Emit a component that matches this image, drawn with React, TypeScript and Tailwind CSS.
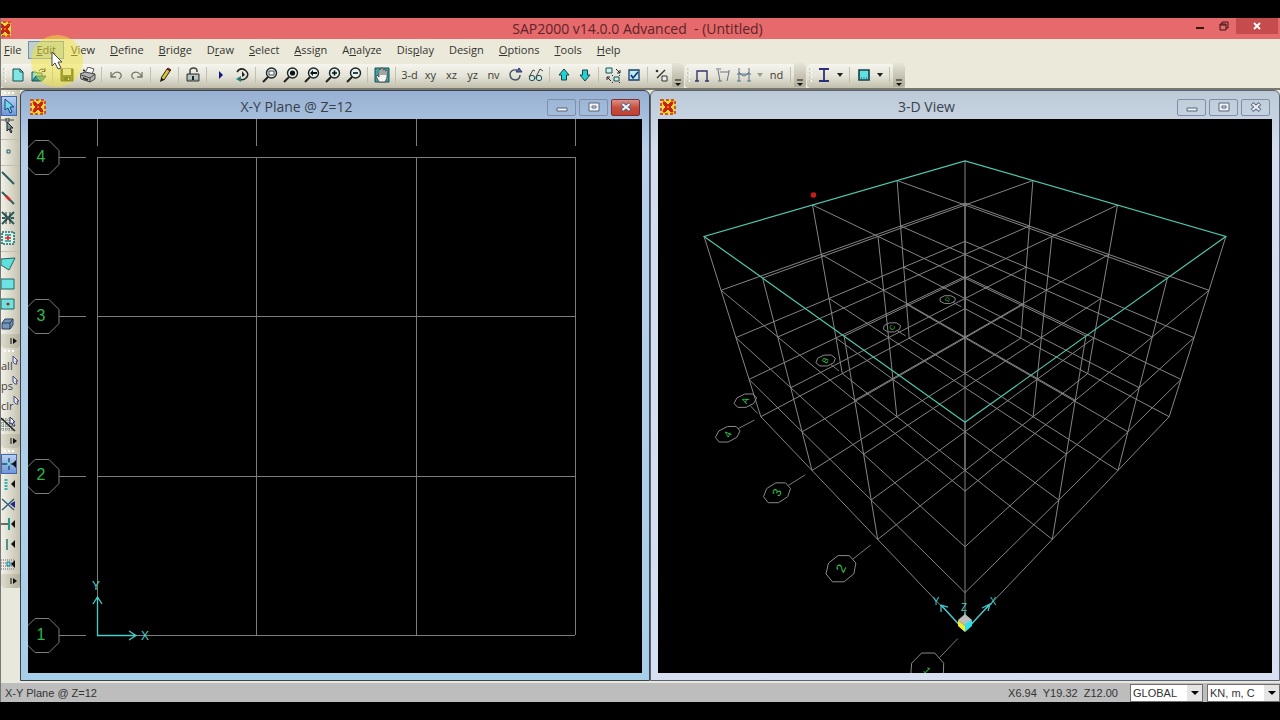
import React from 'react'

interface IconProps {
    name: string;
}

interface ToolButton {
    name: string;
    label?: string;
    active?: boolean;
}

type Point = [number, number];

const menus: string[][] = [
    ["", "F", "ile"],
    ["", "E", "dit"],
    ["", "V", "iew"],
    ["", "D", "efine"],
    ["", "B", "ridge"],
    ["D", "r", "aw"],
    ["", "S", "elect"],
    ["", "A", "ssign"],
    ["A", "n", "alyze"],
    ["Dis", "p", "lay"],
    ["Desi", "g", "n"],
    ["", "O", "ptions"],
    ["", "T", "ools"],
    ["", "H", "elp"],
]

const mainTools: ToolButton[][] = [
    [{ name: "new" }, { name: "open" }],
    [{ name: "save" }, { name: "print" }],
    [{ name: "undo" }, { name: "redo" }],
    [{ name: "pencil" }],
    [{ name: "lock" }],
    [{ name: "run" }, { name: "redraw" }],
    [{ name: "zoom window" }, { name: "zoom full" }, { name: "zoom previous" }, { name: "zoom in" }, { name: "zoom out" }],
    [{ name: "pan" }],
    [{ name: "view 3-d", label: "3-d" }, { name: "view xy", label: "xy" }, { name: "view xz", label: "xz" }, { name: "view yz", label: "yz" }, { name: "view nv", label: "nv" }, { name: "rotate" }, { name: "glasses" }],
    [{ name: "up" }, { name: "down" }],
    [{ name: "shrink" }, { name: "check" }],
    [{ name: "assign" }],
]

const sideTools: ToolButton[][][] = [
    [
        [{ name: "pointer", active: true }, { name: "reshape" }],
        [{ name: "joint" }],
        [{ name: "frame" }, { name: "quick frame" }, { name: "braces" }, { name: "secondary" }],
        [{ name: "poly area" }, { name: "rect area" }, { name: "quick area" }, { name: "solid" }],
    ],
    [
        [{ name: "select all" }, { name: "select previous" }, { name: "clear selection" }, { name: "intersecting" }],
    ],
    [
        [{ name: "snap points", active: true }, { name: "snap ends" }, { name: "snap intersections" }, { name: "snap perpendicular" }, { name: "snap lines" }, { name: "snap grid" }],
    ],
]

const lens = (inner: React.ReactNode) => (
    <>
        <path d="M6 10 L1 15" stroke="#222" strokeWidth="2" />
        <circle cx="9.5" cy="6" r="5" fill="#dff3f0" stroke="#222" strokeWidth="1.4" />
        {inner}
    </>
)

const snapArrow = <path d="M14 4 V12 L10 8 Z" fill="#111" />
const smallCursor = <path d="M9 1 L14 6 L12 6 L14 10 L12 10 L11 7 L9 8 Z" fill="#fff" stroke="#33336b" />

const icons: Record<string, React.ReactNode> = {
    "new": <path d="M3 2 H10 L13 5 V14 H3 Z M10 2 V5 H13" fill="#7fe6e4" stroke="#174d55" />,
    "open": <><path d="M1 14 V5 H5 L6 6 H11 V9" fill="#8fdcd0" stroke="#20504c" /><path d="M1 14 L5 9 H15 L11 14 Z" fill="#2a9a96" stroke="#20504c" /><path d="M8 4 Q11 0 14 4 M14 1 V4.5 H11" fill="none" stroke="#222" /></>,
    "save": <><path d="M2 2 H14 V14 H2 Z" fill="#5a6018" stroke="#3c420c" /><path d="M4 2 H12 V8 H4 Z" fill="#e3e5c8" /><path d="M5 10 H11 V14 H5 Z" fill="#333a10" /><path d="M9 11 H10 V13 H9 Z" fill="#eee" /></>,
    "print": <><path d="M5 6 L8 0 L14 2 L12 7 Z" fill="#fafafa" stroke="#555" /><path d="M0 7 L5 5 L15 7 V12 L10 15 L1 12 Z" fill="#b2b2b2" stroke="#444" /><path d="M1 8 L10 11 V15 M10 11 L15 7" fill="none" stroke="#444" /><path d="M3 3 L5 4 M3 11 L8 13" stroke="#222" strokeWidth="1.5" /></>,
    "undo": <path d="M3 5 V10 H8 M3 10 Q7 3 12 6 Q15 9 11 12" fill="none" stroke="#767669" strokeWidth="1.3" />,
    "redo": <path d="M13 5 V10 H8 M13 10 Q9 3 4 6 Q1 9 5 12" fill="none" stroke="#767669" strokeWidth="1.3" />,
    "pencil": <><path d="M4 11 L10 2 L13 4 L7 13 Z" fill="#d8c437" stroke="#222" /><path d="M10 2 L11 1 L14 3 L13 4 Z" fill="#b03030" stroke="#601515" /><path d="M4 11 L3 15 L7 13 Z" fill="#111" /></>,
    "lock": <><path d="M5 7 V4 Q5 1 8.5 1 Q12 1 12 4 V5" fill="none" stroke="#444" strokeWidth="1.5" /><path d="M2 7 H14 V14 H2 Z" fill="#9aa9a6" stroke="#333" /><path d="M3 9 H13 M3 11 H13" stroke="#d8e2df" /><path d="M7 9 H9 V13 H7 Z" fill="#222" /></>,
    "run": <path d="M6 4 L10 8 L6 12 Z" fill="#14148c" />,
    "redraw": <><path d="M3 5 Q6 0 11 3 Q16 7 12 11 Q9 14 5 12" fill="none" stroke="#222" strokeWidth="1.5" /><path d="M7 9 L2 12 L7 15 Z" fill="#277c78" /><path d="M8 4 L11 8 L8 10 Z" fill="#222" /></>,
    "zoom window": lens(<path d="M7 4 H12 V8 H7 Z" fill="#fff" stroke="#444" />),
    "zoom full": lens(<circle cx="9.5" cy="6" r="2.6" fill="#111" />),
    "zoom previous": lens(<path d="M6 6 L9 3 V5 H13 V7 H9 V9 Z" fill="#111" />),
    "zoom in": lens(<path d="M7 6 H12 M9.5 3.5 V8.5" stroke="#111" strokeWidth="1.6" />),
    "zoom out": lens(<path d="M7 6 H12" stroke="#111" strokeWidth="1.6" />),
    "pan": <><path d="M1 1 H15 V15 H1 Z" fill="#38a7a5" stroke="#174d55" /><path d="M5 15 L2 9 L3 8 L5 10 V3 L6 2 L7 3 V1 H9 V3 L11 2 V4 L13 3 V11 L11 15 Z" fill="#f4f4f4" stroke="#555" /><path d="M7 3 V8 M9 3 V8 M11 4 V8" stroke="#555" /></>,
    "rotate": <><path d="M10 3 Q4 2 3 7 Q3 13 9 13 Q13 12 13 8" fill="none" stroke="#44515f" strokeWidth="1.4" /><path d="M9 5 H15 L12 1 Z" fill="#5a68a8" stroke="#33336b" /></>,
    "glasses": <><circle cx="4" cy="11" r="2.7" fill="#cde9e5" stroke="#284f4d" /><circle cx="11" cy="11" r="2.7" fill="#cde9e5" stroke="#284f4d" /><path d="M1 10 L5 3 L7 4 M8 10 L12 2 L15 4 M7 11 H8" fill="none" stroke="#444" /></>,
    "up": <path d="M8 2 L13 8 H10.5 V13 H5.5 V8 H3 Z" fill="#1fd3d0" stroke="#1d3f4a" />,
    "down": <path d="M8 14 L3 8 H5.5 V3 H10.5 V8 H13 Z" fill="#1fd3d0" stroke="#1d3f4a" />,
    "shrink": <><path d="M1 1 H7 V6 H1 Z M9 10 H14 V14 H9 Z" fill="#c6f2ed" stroke="#1c5150" /><path d="M8 9 L7 8 M15 9 L14 8 M8 15 L7 16 M15 15 L14 16" stroke="#222" /><path d="M11 2 L15 6 M15 3 V6 H12 M6 14 L2 10 M2 13 V10 H5" fill="none" stroke="#222" /></>,
    "check": <><path d="M3 3 H13 V13 H3 Z" fill="#b6edf0" stroke="#223d6b" strokeWidth="1.3" /><path d="M5 8 L7 11 L12 5" fill="none" stroke="#1b2f78" strokeWidth="1.6" /></>,
    "assign": <><path d="M3 11 L11 3" stroke="#333" strokeWidth="1.3" /><path d="M8 9 H13 V14 H8 Z" fill="#eee" stroke="#333" /><circle cx="3" cy="4" r="1.3" fill="#333" /></>,
    "bent": <path d="M3 14 V4 H13 V14 M1 14 H5 M11 14 H15" fill="none" stroke="#34346f" strokeWidth="1.4" />,
    "bent 2": <path d="M5 14 L3 3 M1 2 H6 M5 5 H14 L12 14 M14 5 V3 M3 14 H7" fill="none" stroke="#6c7181" />,
    "bent 3": <path d="M3 1 V14 M13 1 V14 M1 7 H15 M3 5 Q8 13 13 5 M1 14 H5 M11 14 H15" fill="none" stroke="#59708a" />,
    "section": <path d="M3 2 H13 M8 2 V14 M3 14 H13" stroke="#303078" strokeWidth="1.8" />,
    "area": <><path d="M3 3 H13 V13 H3 Z" fill="#5fe0e3" stroke="#1b3c49" strokeWidth="1.6" /><path d="M5 11 H6 M7.5 11 H8.5 M10 11 H11" stroke="#1b3c49" /></>,
    "pointer": <path d="M3 1 V12 L6 10 L8 15 L10 14 L8 9 H12 Z" fill="#69e0e2" stroke="#1c3f7c" />,
    "reshape": <><path d="M0 2 H13 M5 0 H8 V4 H5 Z" fill="#dcefff" stroke="#444" /><path d="M6 4 V13 L8 11 L10 15 L11 14 L9 10 H12 Z" fill="#7c9a9c" stroke="#222" /></>,
    "joint": <path d="M6 6 H9 V9 H6 Z" fill="#bdf2f1" stroke="#35575c" />,
    "frame": <path d="M1 2 L13 14" stroke="#2a5f5d" strokeWidth="2" />,
    "quick frame": <><path d="M1 2 L13 14" stroke="#2a5f5d" strokeWidth="2" /><path d="M5 6 L9 10" stroke="#dc2525" strokeWidth="2.5" /></>,
    "braces": <><path d="M1 2 L13 14 M13 2 L1 14 M1 8 H4 M10 8 H13" stroke="#245e5c" strokeWidth="2" /><path d="M5 2 V14 M9 2 V14" stroke="#333" /></>,
    "secondary": <><path d="M1 2 H13 V14 H1 Z" fill="#d9f2ee" stroke="#1f6d6b" strokeWidth="1.6" strokeDasharray="2 1" /><path d="M4 5 H10 M4 11 H10" stroke="#2b8a84" strokeWidth="1.4" /><path d="M4 8 H10 M7 6 V10" stroke="#d22" strokeWidth="1.6" /></>,
    "poly area": <path d="M0 3 L14 2 L8 14 L0 9 Z" fill="#5fe0dd" stroke="#246260" />,
    "rect area": <path d="M0 3 H13 V13 H0 Z" fill="#6ae4e2" stroke="#246260" />,
    "quick area": <><path d="M0 3 H13 V13 H0 Z" fill="#6ae4e2" stroke="#246260" /><circle cx="7" cy="8" r="1.6" fill="#b22" /></>,
    "solid": <path d="M1 7 L4 3 H12 V9 L9 13 H1 Z M1 7 H9 V13 M9 7 L12 3" fill="#7396b4" stroke="#2b3c66" />,
    "intersecting": <><path d="M0 4 H12 M0 7 H12 M0 10 H12 M0 13 H12 M2 2 V15 M5 2 V15 M8 2 V15 M11 2 V15" stroke="#57706d" strokeDasharray="1 1" /><path d="M0 2 L14 15" stroke="#222" strokeWidth="1.6" />{smallCursor}</>,
    "snap points": <><path d="M0 8 H11 M7 2 V14" stroke="#264a70" strokeWidth="1.4" /><circle cx="7" cy="8" r="1.8" fill="#6ae4e2" />{snapArrow}</>,
    "snap ends": <><path d="M5 3 V14" stroke="#36b5b1" strokeWidth="3" strokeDasharray="2 1" />{snapArrow}</>,
    "snap intersections": <><path d="M1 3 L13 14 M1 14 L13 3" stroke="#2f5f7c" strokeWidth="1.4" /><path d="M14 5 V12 L9 8 Z" fill="#26268c" /></>,
    "snap perpendicular": <><path d="M0 8 H8" stroke="#333" strokeWidth="1.4" /><path d="M8 2 V14" stroke="#209a8e" strokeWidth="2" />{snapArrow}</>,
    "snap lines": <><path d="M6 3 V14" stroke="#2a8078" strokeWidth="1.6" />{snapArrow}</>,
    "snap grid": <><path d="M0 4 H14 M0 7 H14 M0 10 H14 M0 13 H14" stroke="#667" strokeDasharray="1 1" /><path d="M6 6 H9 V10 H6 Z" fill="#7ee" stroke="#279" />{snapArrow}</>,
    "logo": <><path d="M1 1 H15 V15 H1 Z" fill="#f7d934" stroke="#d9531e" strokeWidth="2" strokeDasharray="3 2" /><path d="M3 3 L5 3 L8 6 L11 3 H13 L12 6 L10 8 L12 10 L13 13 H11 L8 10 L5 13 H3 L4 10 L6 8 L4 6 Z" fill="#c42318" stroke="#c42318" /><path d="M7 7 H9 V9 H7 Z" fill="#e8681e" /></>,
    "mini cursor": <path d="M8 2 L13 7 H11 L12 10 L10 10 L8 8 Z" fill="#dfe6f5" stroke="#4b4b7c" />,
}

const Icon: React.FC<IconProps> = ({ name }) => (
    <svg viewBox="0 0 16 16" className="size-4 shrink-0" aria-hidden="true">{icons[name]}</svg>
)

const selectWords: Record<string, string> = {
    "select all": "all",
    "select previous": "ps",
    "clear selection": "clr",
}

const Tool: React.FC<ToolButton> = ({ name, label }) => (
    <button aria-label={name} className="flex h-5 w-[21px] shrink-0 items-center justify-center text-[11px] text-[#3c3c36]">
        {label ? label : <Icon name={name} />}
    </button>
)

const SideTool: React.FC<ToolButton> = ({ name, active }) => (
    <button
        aria-label={name}
        className={active ? "flex h-5 w-4 items-center border border-[#3e68b4] bg-linear-to-b from-[#b8d0f2] to-[#6f97d8]" : "flex h-5 w-4 items-center"}
    >
        {selectWords[name] ? (
            <span className="flex items-start text-[11px] leading-4 text-[#3f3f3f]">
                <span className="-mr-2 pt-1">{selectWords[name]}</span>
                <Icon name="mini cursor" />
            </span>
        ) : <Icon name={name} />}
    </button>
)

const Separator = () => <span className="mx-[3px] h-4 w-px shrink-0 bg-[#c2c0b0]" />

const Handle = () => (
    <svg viewBox="0 0 6 16" className="h-4 w-[6px] shrink-0" aria-hidden="true">
        <path d="M4 1 V15" stroke="#fff" strokeWidth="2" strokeDasharray="2 2" />
        <path d="M3 1 V15" stroke="#b5b29f" strokeDasharray="2 2" />
    </svg>
)

const Overflow = () => (
    <button aria-label="Toolbar options" className="flex h-6 w-3 shrink-0 items-end justify-center rounded-r bg-linear-to-b from-[#e6e4d8] to-[#aeaa97]">
        <svg viewBox="0 0 8 8" className="size-2"><path d="M1 1 H7" stroke="#111" /><path d="M1 4 H7 L4 7 Z" fill="#111" /></svg>
    </button>
)

const DropArrow: React.FC<{ color: string }> = ({ color }) => (
    <button aria-label="More" className="flex h-5 w-3 shrink-0 items-center justify-center">
        <svg viewBox="0 0 6 6" className="size-[6px]"><path d="M0 1 H6 L3 5 Z" fill={color} /></svg>
    </button>
)

const toolbarClass = "flex h-6 items-center rounded-l bg-linear-to-b from-[#f6f5ee] via-[#e5e4d8] to-[#c1beab] pb-[2px]"

// Projects a grid point (bays in x and y, storeys in z) to the 3-D canvas
const project = (x: number, y: number, z: number): Point => {
    const w = 1 + 0.1641 * (x + y) - 0.081 * z
    return [965 + 101.6 * (x - y) / w, (631 - 3.05 * (x + y) - 86.4 * z) / w]
}

const segment = (a: Point, b: Point) => `M${a[0].toFixed(1)} ${a[1].toFixed(1)} L${b[0].toFixed(1)} ${b[1].toFixed(1)}`

const frameLines: string[] = []
for (let z = 0; z <= 4; z++) {
    for (let i = 0; i <= 3; i++) {
        if (z === 4 && (i === 0 || i === 3)) continue
        frameLines.push(segment(project(i, 0, z), project(i, 3, z)))
        frameLines.push(segment(project(0, i, z), project(3, i, z)))
    }
}
for (let x = 0; x <= 3; x++) {
    for (let y = 0; y <= 3; y++) {
        frameLines.push(segment(project(x, y, 0), project(x, y, 4)))
    }
}

const topOutline = [project(0, 0, 4), project(3, 0, 4), project(3, 3, 4), project(0, 3, 4)]

const octagon = (x: number, y: number) => [0, 1, 2, 3, 4, 5, 6, 7].map((k) => {
    const angle = Math.PI / 8 + k * Math.PI / 4
    return project(x + 0.115 * Math.cos(angle), y + 0.115 * Math.sin(angle), 0)
}).join(" ")

const bubbles = [0, 1, 2, 3].flatMap((i) => [
    { text: String(i + 1), size: [10, 13, 12, 10][i], x: -0.35, y: i, line: segment(project(-0.07, i, 0), project(-0.24, i, 0)) },
    { text: "ABCD"[i], size: 9 - i, x: i, y: 3.35, line: segment(project(i, 3.07, 0), project(i, 3.24, 0)) },
])

const PlanView = () => (
    <svg viewBox="28 119 614 554" className="block size-full" fontFamily="Liberation Sans, sans-serif">
        <g fill="none" stroke="#7d7d7d">
            {[97.5, 256.5, 416.5, 575.5].map((x) => <path key={x} d={`M${x} 119 V146 M${x} 157 V635`} />)}
            {[157.5, 316.5, 476.5, 635.5].map((y) => (
                <path key={y} d={`M97 ${y} H575 M59 ${y} H86 M35 ${y - 17} H49 L59 ${y - 7} V${y + 7} L49 ${y + 17} H35 L25 ${y + 7} V${y - 7} Z`} />
            ))}
        </g>
        <g fill="#2fb84a" fontSize="16" textAnchor="middle">
            <text x="41" y="162">4</text>
            <text x="41" y="321">3</text>
            <text x="41" y="480">2</text>
            <text x="41" y="640">1</text>
        </g>
        <path d="M97.5 597 V635.5 H136 M93 604 L97.5 597 L102 604 M129 631 L136 635.5 L129 640" fill="none" stroke="#45cfc8" strokeWidth="1.3" />
        <g fill="#45cfc8" fontSize="12" textAnchor="middle">
            <text x="96" y="590">Y</text>
            <text x="145" y="640">X</text>
        </g>
    </svg>
)

const SpaceView = () => (
    <svg viewBox="658 119 614 554" className="block size-full" fontFamily="Liberation Sans, sans-serif">
        <path d={frameLines.join(" ")} fill="none" stroke="#858585" />
        <polygon points={topOutline.join(" ")} fill="none" stroke="#4fc7b0" strokeWidth="1.2" />
        {bubbles.map((bubble) => {
            const [cx, cy] = project(bubble.x, bubble.y, 0)
            return (
                <g key={bubble.text}>
                    <path d={bubble.line} stroke="#7d7d7d" />
                    <polygon points={octagon(bubble.x, bubble.y)} fill="none" stroke="#8a8a8a" />
                    <text
                        fill="#35c44c"
                        fontSize={bubble.size}
                        textAnchor="middle"
                        dominantBaseline="central"
                        transform={`translate(${cx} ${cy}) rotate(${bubble.text === "1" ? 45 : -65})`}
                    >
                        {bubble.text}
                    </text>
                </g>
            )
        })}
        <circle cx="813.5" cy="195" r="2.8" fill="#c91d1d" />
        <path d="M965 631 L942 606 M941 612 L941 605 L948 607 M965 631 L989 605 M982 608 L990 604 L988 611 M965 618 V612" fill="none" stroke="#3fc9cf" strokeWidth="1.3" />
        <path d="M965 614 L972 620 L965 626 L958 620 Z" fill="#bdbdbd" />
        <path d="M958 620 L965 626 V632 L958 626 Z" fill="#f0ec2e" />
        <path d="M972 620 L965 624 V632 L972 626 Z" fill="#29e0ec" />
        <g fill="#45cfc8" fontSize="10" textAnchor="middle">
            <text x="936" y="605">Y</text>
            <text x="964" y="611">Z</text>
            <text x="993" y="605">X</text>
        </g>
    </svg>
)

interface ViewWindowProps {
    title: string;
    active?: boolean;
    children: React.ReactNode;
}

const ViewWindow: React.FC<ViewWindowProps> = ({ title, active, children }) => {
    const buttonClass = "flex h-[17px] w-[29px] items-center justify-center rounded-[2px] border border-[#7f8fa8]"
    const glyph = active ? "#f3f6fa" : "#eef2f8"
    return (
        <section
            className={active
                ? "flex min-w-0 flex-1 flex-col rounded-t-md border border-[#3c4450] bg-linear-to-b from-[#98b1d2] via-[#b8cfea] via-10% to-[#a8cfe8] px-[7px] pb-[7px]"
                : "flex min-w-0 flex-1 flex-col rounded-t-md border border-[#5b6470] bg-linear-to-b from-[#bccad7] via-[#d3dded] via-10% to-[#d7e0f2] px-[7px] pb-[7px]"}
        >
            <header className="flex h-7 shrink-0 items-center pt-1">
                <span className="ml-[2px]"><Icon name="logo" /></span>
                <h2 className="flex-1 text-center text-sm leading-5 text-[#38404c]">{title}</h2>
                <div className="flex gap-[3px] pr-[2px]">
                    <button aria-label="Minimize" className={buttonClass}>
                        <svg viewBox="0 0 12 12" className="size-3"><path d="M1 7 H11 V10 H1 Z" fill={glyph} stroke="#56647b" /></svg>
                    </button>
                    <button aria-label="Maximize" className={buttonClass}>
                        <svg viewBox="0 0 12 12" className="size-3"><path d="M1 2 H11 V10 H1 Z M4 5 H8 V7 H4 Z" fill={glyph} stroke="#56647b" /></svg>
                    </button>
                    <button
                        aria-label="Close"
                        className={active
                            ? "flex h-[17px] w-[29px] items-center justify-center rounded-[2px] border border-[#7a3038] bg-linear-to-b from-[#dd9086] via-[#c84e3e] to-[#c0402e]"
                            : buttonClass}
                    >
                        <svg viewBox="0 0 12 12" className="size-3">
                            <path d="M2 2.5 L10 9.5 M10 2.5 L2 9.5" stroke="#56647b" strokeWidth="3.8" />
                            <path d="M2.5 3 L9.5 9 M9.5 3 L2.5 9" stroke={glyph} strokeWidth="2" />
                        </svg>
                    </button>
                </div>
            </header>
            <div className="min-h-0 flex-1 bg-black">{children}</div>
        </section>
    )
}

const StatusSelect: React.FC<{ label: string; value: string }> = ({ label, value }) => (
    <div className="relative">
        <select aria-label={label} className="block h-[18px] w-[73px] appearance-none border border-[#6f6f6f] bg-white pl-[2px] text-[11px] leading-4 text-[#333]">
            <option>{value}</option>
        </select>
        <span className="pointer-events-none absolute top-px right-px flex h-4 w-[15px] items-center justify-center bg-[#e4e4e4]">
            <svg viewBox="0 0 8 8" className="size-2"><path d="M0 2 H8 L4 6 Z" fill="#000" /></svg>
        </span>
    </div>
)

const App = () => {
    return (
        <div className="flex h-screen flex-col bg-black py-[18px] font-['Open_Sans',sans-serif]">
            <div className="flex min-h-0 flex-1 flex-col border-l border-[#777] bg-[#ebe9da]">
                <header className="flex h-[21px] shrink-0 items-center bg-[#e6696b]">
                    <div className="w-[10px] overflow-hidden">
                        <span className="-ml-1 flex"><Icon name="logo" /></span>
                    </div>
                    <h1 className="flex-1 pl-[76px] text-center text-sm leading-5 whitespace-pre text-[#5c2429]">SAP2000 v14.0.0 Advanced  - (Untitled)</h1>
                    <div className="flex h-full items-start">
                        <button aria-label="Minimize" className="flex h-4 w-6 items-center justify-center">
                            <svg viewBox="0 0 8 8" className="size-2"><path d="M0 6 H8" stroke="#3a1517" strokeWidth="2" /></svg>
                        </button>
                        <button aria-label="Restore" className="flex h-4 w-6 items-center justify-center">
                            <svg viewBox="0 0 10 10" className="size-[10px]"><path d="M1 3 H7 V9 H1 Z M3 3 V1 H9 V7 H7 M1 4 H7" fill="none" stroke="#3a1517" /></svg>
                        </button>
                        <button aria-label="Close" className="mr-[2px] flex h-4 w-[42px] items-center justify-center bg-[#c54c4c]">
                            <svg viewBox="0 0 8 8" className="size-2"><path d="M1 1 L7 7 M7 1 L1 7" stroke="#fff" strokeWidth="1.8" /></svg>
                        </button>
                    </div>
                </header>

                <nav className="flex h-[25px] shrink-0 items-center pb-[3px] text-[11px] leading-4 text-[#33332e]">
                    {menus.map(([before, key, after], index) => (
                        <div key={index} className="relative -ml-px first:-ml-[5px]">
                            <button className={index === 1 ? "h-[18px] border border-[#6c8fc0] bg-[#bfd0c9] px-[7px]" : "h-[18px] px-2"}>
                                {before}<u>{key}</u>{after}
                            </button>
                            {index === 1 && (
                                <span className="pointer-events-none absolute -top-[6px] left-[3px] z-10 size-[52px] rounded-full bg-[#f2e53c]/50">
                                    <svg viewBox="0 0 14 20" className="absolute top-4 left-5 h-5 w-[14px]" aria-hidden="true">
                                        <path d="M1 1 V15 L4 12 L7 18 L10 17 L7 11 H11 Z" fill="#fff" stroke="#444" />
                                    </svg>
                                </span>
                            )}
                        </div>
                    ))}
                </nav>

                <div className="flex h-6 shrink-0 gap-px">
                    <div className={toolbarClass}>
                        <Handle />
                        {mainTools.map((group, index) => (
                            <React.Fragment key={index}>
                                {index > 0 && <Separator />}
                                {group.map((tool) => <Tool key={tool.name} {...tool} />)}
                            </React.Fragment>
                        ))}
                        <Overflow />
                    </div>
                    <div className={toolbarClass}>
                        <Handle />
                        <Tool name="bent" />
                        <Tool name="bent 2" />
                        <Tool name="bent 3" />
                        <DropArrow color="#99998c" />
                        <Tool name="edit nd" label="nd" />
                        <Separator />
                        <Overflow />
                    </div>
                    <div className={toolbarClass}>
                        <Handle />
                        <Tool name="section" />
                        <DropArrow color="#222" />
                        <Separator />
                        <Tool name="area" />
                        <DropArrow color="#222" />
                        <Separator />
                        <Overflow />
                    </div>
                </div>

                <main className="flex min-h-0 flex-1 border-t-2 border-[#77776f] bg-[#e9e8dc]">
                    <aside className="flex w-[19px] shrink-0 flex-col">
                        {sideTools.map((bar, barIndex) => (
                            <div key={barIndex} className="flex flex-col bg-linear-to-r from-[#f2f1e8] to-[#c4c1ad]">
                                <svg viewBox="0 0 16 6" className="h-[6px] w-4" aria-hidden="true">
                                    <path d="M3 3 H14" stroke="#fff" strokeWidth="2" strokeDasharray="2 2" />
                                </svg>
                                {bar.map((group, index) => (
                                    <div key={index} className={index > 0 ? "mt-[3px] border-t border-[#c2c0b0] pt-[2px]" : ""}>
                                        {group.map((tool) => <SideTool key={tool.name} {...tool} />)}
                                    </div>
                                ))}
                                <button aria-label="Toolbar options" className="flex h-[14px] items-center justify-end rounded-b bg-linear-to-r from-[#dedccd] to-[#b3af9b] pr-[2px]">
                                    <svg viewBox="0 0 8 8" className="size-2"><path d="M1 1 V7" stroke="#111" /><path d="M3 1 V7 L7 4 Z" fill="#111" /></svg>
                                </button>
                            </div>
                        ))}
                    </aside>
                    <div className="flex min-w-0 flex-1 pb-[2px]">
                        <ViewWindow title="X-Y Plane @ Z=12" active><PlanView /></ViewWindow>
                        <ViewWindow title="3-D View"><SpaceView /></ViewWindow>
                    </div>
                </main>

                <footer className="flex h-[19px] shrink-0 items-center bg-[#bdbdbd] font-['Liberation_Sans',sans-serif] text-[11px] leading-4 text-[#333]">
                    <span className="flex-1 pl-1">X-Y Plane @ Z=12</span>
                    <span className="pr-3 whitespace-pre">X6.94  Y19.32  Z12.00</span>
                    <div className="flex gap-1">
                        <StatusSelect label="Coordinate system" value="GLOBAL" />
                        <StatusSelect label="Units" value="KN, m, C" />
                    </div>
                </footer>
            </div>
        </div>
    )
}

export default App
